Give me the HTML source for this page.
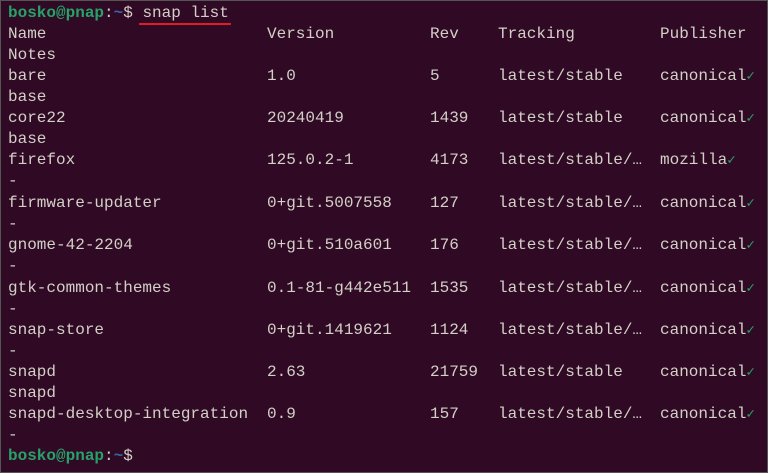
<!DOCTYPE html>
<html><head><meta charset="utf-8"><style>
html,body{margin:0;padding:0;}
body{width:768px;height:473px;background:#300a24;overflow:hidden;position:relative;font-family:"Liberation Mono",monospace;font-size:16px;color:#d3d0c8;}
.l{position:absolute;left:0;height:21px;line-height:21px;white-space:pre;}
.c{position:absolute;top:0;}
.g{color:#26a269;font-weight:bold;}
.b{color:#3465a4;font-weight:bold;}
.k{color:#26a269;font-size:14px;}
.u{position:absolute;left:139px;top:23px;width:92px;height:2px;background:#e01b24;}
.frame{position:absolute;inset:0;border:1px solid #555;}
</style></head><body>
<div class="l" style="top:3px"><span class="c" style="left:8px"><span class="g">bosko@pnap</span>:<span class="b">~</span>$ snap list</span></div>
<div class="u"></div>
<div class="l" style="top:24px"><span class="c" style="left:8px">Name</span><span class="c" style="left:267px">Version</span><span class="c" style="left:430px">Rev</span><span class="c" style="left:498px">Tracking</span><span class="c" style="left:660px">Publisher</span></div>
<div class="l" style="top:45px"><span class="c" style="left:8px">Notes</span></div>
<div class="l" style="top:66px"><span class="c" style="left:8px">bare</span><span class="c" style="left:267px">1.0</span><span class="c" style="left:430px">5</span><span class="c" style="left:498px">latest/stable</span><span class="c" style="left:660px">canonical<span class="k">✓</span></span></div>
<div class="l" style="top:87px"><span class="c" style="left:8px">base</span></div>
<div class="l" style="top:108px"><span class="c" style="left:8px">core22</span><span class="c" style="left:267px">20240419</span><span class="c" style="left:430px">1439</span><span class="c" style="left:498px">latest/stable</span><span class="c" style="left:660px">canonical<span class="k">✓</span></span></div>
<div class="l" style="top:129px"><span class="c" style="left:8px">base</span></div>
<div class="l" style="top:150px"><span class="c" style="left:8px">firefox</span><span class="c" style="left:267px">125.0.2-1</span><span class="c" style="left:430px">4173</span><span class="c" style="left:498px">latest/stable/…</span><span class="c" style="left:660px">mozilla<span class="k">✓</span></span></div>
<div class="l" style="top:171px"><span class="c" style="left:8px">-</span></div>
<div class="l" style="top:193px"><span class="c" style="left:8px">firmware-updater</span><span class="c" style="left:267px">0+git.5007558</span><span class="c" style="left:430px">127</span><span class="c" style="left:498px">latest/stable/…</span><span class="c" style="left:660px">canonical<span class="k">✓</span></span></div>
<div class="l" style="top:214px"><span class="c" style="left:8px">-</span></div>
<div class="l" style="top:235px"><span class="c" style="left:8px">gnome-42-2204</span><span class="c" style="left:267px">0+git.510a601</span><span class="c" style="left:430px">176</span><span class="c" style="left:498px">latest/stable/…</span><span class="c" style="left:660px">canonical<span class="k">✓</span></span></div>
<div class="l" style="top:256px"><span class="c" style="left:8px">-</span></div>
<div class="l" style="top:278px"><span class="c" style="left:8px">gtk-common-themes</span><span class="c" style="left:267px">0.1-81-g442e511</span><span class="c" style="left:430px">1535</span><span class="c" style="left:498px">latest/stable/…</span><span class="c" style="left:660px">canonical<span class="k">✓</span></span></div>
<div class="l" style="top:299px"><span class="c" style="left:8px">-</span></div>
<div class="l" style="top:320px"><span class="c" style="left:8px">snap-store</span><span class="c" style="left:267px">0+git.1419621</span><span class="c" style="left:430px">1124</span><span class="c" style="left:498px">latest/stable/…</span><span class="c" style="left:660px">canonical<span class="k">✓</span></span></div>
<div class="l" style="top:341px"><span class="c" style="left:8px">-</span></div>
<div class="l" style="top:362px"><span class="c" style="left:8px">snapd</span><span class="c" style="left:267px">2.63</span><span class="c" style="left:430px">21759</span><span class="c" style="left:498px">latest/stable</span><span class="c" style="left:660px">canonical<span class="k">✓</span></span></div>
<div class="l" style="top:383px"><span class="c" style="left:8px">snapd</span></div>
<div class="l" style="top:404px"><span class="c" style="left:8px">snapd-desktop-integration</span><span class="c" style="left:267px">0.9</span><span class="c" style="left:430px">157</span><span class="c" style="left:498px">latest/stable/…</span><span class="c" style="left:660px">canonical<span class="k">✓</span></span></div>
<div class="l" style="top:425px"><span class="c" style="left:8px">-</span></div>
<div class="l" style="top:446px"><span class="c" style="left:8px"><span class="g">bosko@pnap</span>:<span class="b">~</span>$</span></div>
<div class="frame"></div>
</body></html>
